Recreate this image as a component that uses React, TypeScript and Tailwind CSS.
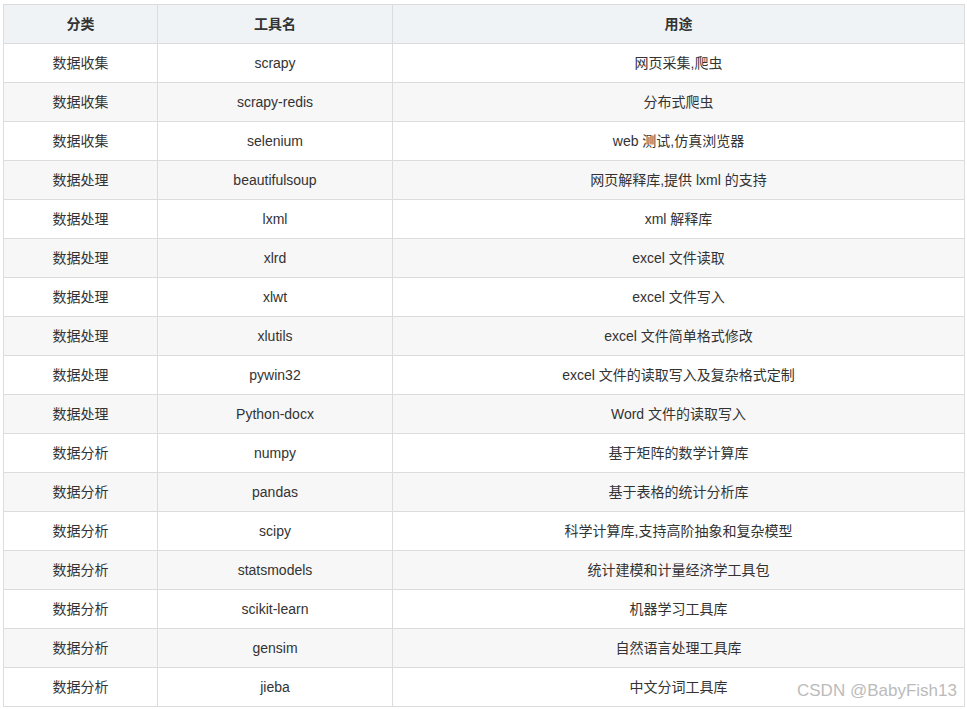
const rows: [string, string, string][] = [
  ["数据收集", "scrapy", "网页采集,爬虫"],
  ["数据收集", "scrapy-redis", "分布式爬虫"],
  ["数据收集", "selenium", "web 测试,仿真浏览器"],
  ["数据处理", "beautifulsoup", "网页解释库,提供 lxml 的支持"],
  ["数据处理", "lxml", "xml 解释库"],
  ["数据处理", "xlrd", "excel 文件读取"],
  ["数据处理", "xlwt", "excel 文件写入"],
  ["数据处理", "xlutils", "excel 文件简单格式修改"],
  ["数据处理", "pywin32", "excel 文件的读取写入及复杂格式定制"],
  ["数据处理", "Python-docx", "Word 文件的读取写入"],
  ["数据分析", "numpy", "基于矩阵的数学计算库"],
  ["数据分析", "pandas", "基于表格的统计分析库"],
  ["数据分析", "scipy", "科学计算库,支持高阶抽象和复杂模型"],
  ["数据分析", "statsmodels", "统计建模和计量经济学工具包"],
  ["数据分析", "scikit-learn", "机器学习工具库"],
  ["数据分析", "gensim", "自然语言处理工具库"],
  ["数据分析", "jieba", "中文分词工具库"],
];

export default function App() {
  return (
    <div className="relative h-[709px] w-[967px] overflow-hidden bg-white pl-[3px] pt-[4px] text-[14px] text-[#333]" style={{ fontFamily: '"Liberation Sans", "Noto Sans CJK SC", sans-serif' }}>
      <table className="w-[962px] border-collapse text-center">
        <thead>
          <tr className="h-[39px] bg-[#eff3f5] font-bold">
            <th className="w-[154px] border border-[#dcdcdc]">分类</th>
            <th className="w-[235px] border border-[#dcdcdc]">工具名</th>
            <th className="border border-[#dcdcdc]">用途</th>
          </tr>
        </thead>
        <tbody>
          {rows.map((r, i) => (
            <tr key={i} className={i % 2 === 1 ? "h-[39px] bg-[#f7f7f7]" : "h-[39px] bg-white"}>
              <td className="border border-[#dcdcdc]">{r[0]}</td>
              <td className="border border-[#dcdcdc]">{r[1]}</td>
              <td className="border border-[#dcdcdc]">{r[2]}</td>
            </tr>
          ))}
        </tbody>
      </table>
      <div className="absolute left-[797px] top-[678px] text-[17px] text-[#bbb]">CSDN @BabyFish13</div>
    </div>
  );
}
